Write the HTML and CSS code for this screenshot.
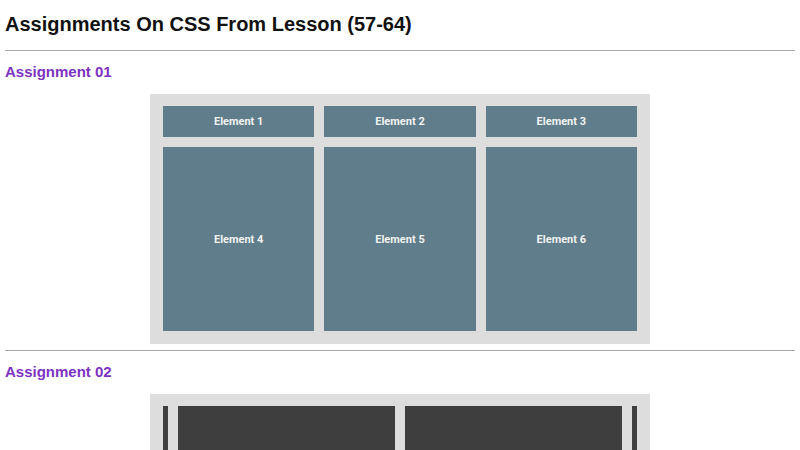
FILE: index.html
```html
<!DOCTYPE html>
<html>
<head>
<meta charset="utf-8">
<link rel="stylesheet" href="styles.css">
</head>
<body>
<h1 class="title">Assignments On CSS From Lesson (57-64)</h1>
<hr class="sep">
<h2 class="sub">Assignment 01</h2>
<div class="box grid-one">
  <div class="el">Element 1</div>
  <div class="el">Element 2</div>
  <div class="el">Element 3</div>
  <div class="el">Element 4</div>
  <div class="el">Element 5</div>
  <div class="el">Element 6</div>
</div>
<hr class="sep">
<h2 class="sub">Assignment 02</h2>
<div class="box grid-two">
  <div class="dk"></div>
  <div class="dk"></div>
  <div class="dk"></div>
  <div class="dk"></div>
</div>
</body>
</html>
```
FILE: styles.css
```css
*, *::before, *::after { box-sizing: border-box; }
html, body { margin: 0; padding: 0; background: #fff; }
body {
  padding: 0 5px;
  font-family: "Liberation Sans", Arial, sans-serif;
  color: #111;
}
.title {
  margin: 0;
  padding-top: 12px;
  height: 50px;
  font-size: 20px;
  line-height: 24px;
  font-weight: bold;
}
.sep {
  margin: 0;
  border: 0;
  border-top: 1px solid #aaa;
  height: 1px;
}
.sub {
  margin: 0;
  padding-top: 12px;
  height: 43px;
  font-size: 15px;
  line-height: 17px;
  color: #7d32c2;
}
.box {
  width: 500px;
  margin: 0 auto;
  background: #dddddd;
  padding: 12px 13px 13px;
  display: grid;
  gap: 10px;
}
.grid-one {
  height: 250px;
  margin-bottom: 6px;
  grid-template-columns: repeat(3, 1fr);
  grid-template-rows: 31px 1fr;
}
.el {
  background: #607d8b;
  color: #f2f2f2;
  font-family: Roboto, "Liberation Sans", sans-serif;
  font-size: 11px;
  font-weight: bold;
  display: flex;
  align-items: center;
  justify-content: center;
}
.grid-two {
  height: 250px;
  grid-template-columns: 5px 1fr 1fr 5px;
}
.dk { background: #3e3e3e; }
```
